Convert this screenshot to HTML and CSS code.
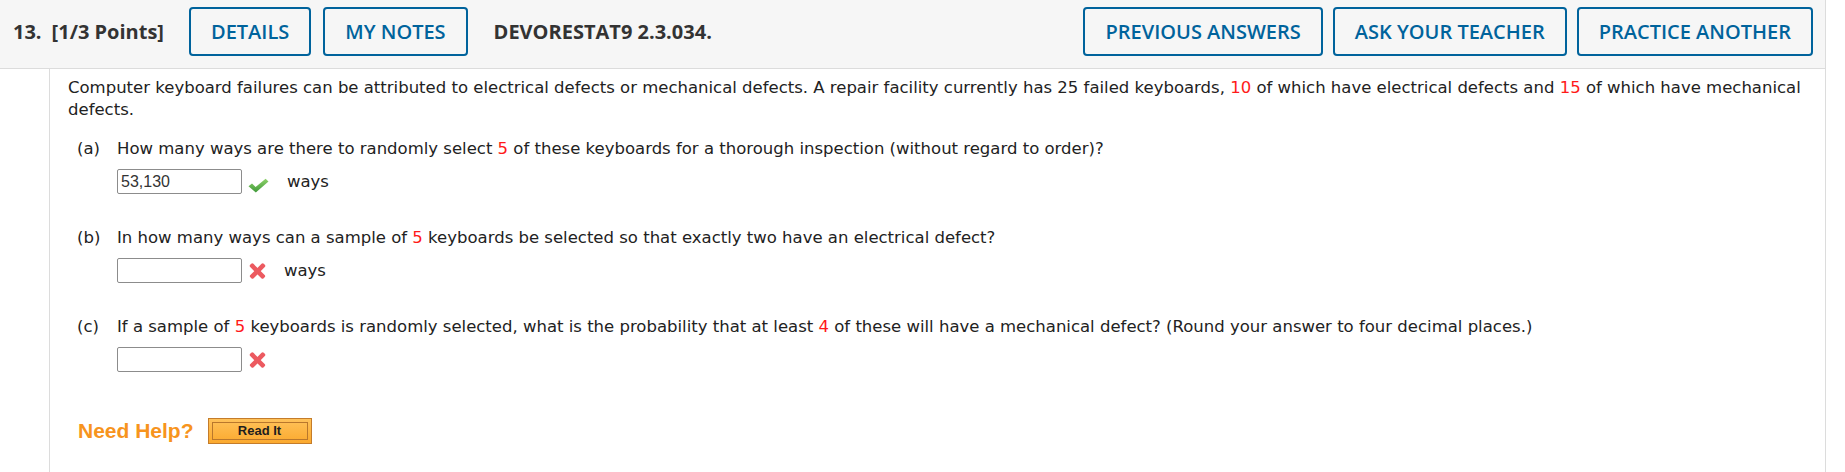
FILE: index.html
```html
<!DOCTYPE html>
<html>
<head>
<meta charset="utf-8">
<link rel="stylesheet" href="styles.css">
</head>
<body>
<div class="page">
  <div class="qhead">
    <span class="qnum">13.</span>
    <span class="qpts">[1/3 Points]</span>
    <button class="hbtn first">DETAILS</button>
    <button class="hbtn">MY NOTES</button>
    <span class="qid">DEVORESTAT9 2.3.034.</span>
    <div class="hright">
      <button class="hbtn">PREVIOUS ANSWERS</button>
      <button class="hbtn">ASK YOUR TEACHER</button>
      <button class="hbtn">PRACTICE ANOTHER</button>
    </div>
  </div>
  <div class="qbody">
    <p class="intro">Computer keyboard failures can be attributed to electrical defects or mechanical defects. A repair facility currently has 25 failed keyboards, <span class="red">10</span> of which have electrical defects and <span class="red">15</span> of which have mechanical defects.</p>

    <div class="part">
      <div class="qline"><span class="plabel">(a)</span><span class="ptext">How many ways are there to randomly select <span class="red">5</span> of these keyboards for a thorough inspection (without regard to order)?</span></div>
      <div class="answer">
        <span class="ansbox">53,130</span>
        <svg class="icon-check" width="21" height="15" viewBox="0 0 21 15">
          <defs>
            <linearGradient id="gc" x1="0" y1="0" x2="0" y2="1">
              <stop offset="0" stop-color="#8fd16a"/>
              <stop offset="1" stop-color="#3f9a3a"/>
            </linearGradient>
          </defs>
          <path d="M0.5 8.2 L4 5.6 L7.6 9 L17.6 0.8 L20.5 3.4 L7.8 14.4 Z" fill="url(#gc)"/>
        </svg>
        <span class="unit">ways</span>
      </div>
    </div>

    <div class="part">
      <div class="qline"><span class="plabel">(b)</span><span class="ptext">In how many ways can a sample of <span class="red">5</span> keyboards be selected so that exactly two have an electrical defect?</span></div>
      <div class="answer">
        <span class="ansbox"></span>
        <svg class="icon-x" width="17" height="16" viewBox="0 0 17 16">
          <g fill="#ec5a60">
            <rect x="-1" y="5.8" width="19" height="4.6" rx="1.6" transform="rotate(45 8.5 8)"/>
            <rect x="-1" y="5.8" width="19" height="4.6" rx="1.6" transform="rotate(-45 8.5 8)"/>
          </g>
        </svg>
        <span class="unit unit-x">ways</span>
      </div>
    </div>

    <div class="part">
      <div class="qline"><span class="plabel">(c)</span><span class="ptext">If a sample of <span class="red">5</span> keyboards is randomly selected, what is the probability that at least <span class="red">4</span> of these will have a mechanical defect? (Round your answer to four decimal places.)</span></div>
      <div class="answer">
        <span class="ansbox"></span>
        <svg class="icon-x" width="17" height="16" viewBox="0 0 17 16">
          <g fill="#ec5a60">
            <rect x="-1" y="5.8" width="19" height="4.6" rx="1.6" transform="rotate(45 8.5 8)"/>
            <rect x="-1" y="5.8" width="19" height="4.6" rx="1.6" transform="rotate(-45 8.5 8)"/>
          </g>
        </svg>
      </div>
    </div>

    <div class="help">
      <span class="needhelp">Need Help?</span>
      <span class="readit"><span class="readit-inner">Read It</span></span>
    </div>
  </div>
</div>
</body>
</html>
```

FILE: styles.css
```css
html, body {
  margin: 0;
  padding: 0;
  background: #ffffff;
}

.page {
  width: 1826px;
  height: 472px;
  box-sizing: border-box;
  border-right: 1px solid #dcdcdc;
  display: flex;
  flex-direction: column;
}

.qhead {
  flex: none;
  border-bottom: 1px solid #dcdcdc;
  background: #f6f6f6;
  display: flex;
  align-items: flex-start;
  padding: 7px 12px 0 13px;
  box-sizing: border-box;
  height: 69px;
  font-family: "Open Sans", "Liberation Sans", sans-serif;
  color: #333333;
}

.qnum, .qpts, .qid {
  font-weight: 700;
  font-size: 20px;
  line-height: 49px;
  height: 49px;
}

.qpts {
  margin-left: 10px;
}

.qid {
  margin-left: 26px;
}

.hbtn {
  font-family: "Open Sans", "Liberation Sans", sans-serif;
  font-weight: 600;
  font-size: 20px;
  color: #00639c;
  background: #f6f6f6;
  border: 2px solid #00639c;
  border-radius: 4px;
  height: 49px;
  padding: 0 20px;
  margin: 0;
  line-height: 45px;
  cursor: pointer;
}

.hbtn.first {
  margin-left: 25px;
}

.hbtn + .hbtn {
  margin-left: 12px;
}

.hright {
  margin-left: auto;
  display: flex;
  gap: 10px;
}

.hright .hbtn + .hbtn {
  margin-left: 0;
}

.qbody {
  flex: 1;
  margin-left: 49px;
  border-left: 1px solid #dcdcdc;
  padding: 8px 0 0 18px;
  font-family: "DejaVu Sans", Verdana, sans-serif;
  font-size: 16.5px;
  line-height: 22px;
  color: #222222;
}

.intro {
  margin: 0;
}

.red {
  color: #ff1a1a;
}

.part {
  margin-top: 17px;
  padding-left: 9px;
}

.part + .part {
  margin-top: 33px;
}

.qline {
  display: flex;
}

.plabel {
  width: 40px;
  flex: none;
}

.answer {
  display: flex;
  align-items: center;
  margin-top: 9px;
  margin-left: 40px;
  height: 25px;
}

.ansbox {
  width: 125px;
  height: 25px;
  box-sizing: border-box;
  border: 1px solid #8c8c8c;
  border-radius: 2px;
  font-family: "Liberation Sans", Arial, sans-serif;
  font-size: 16px;
  line-height: 23px;
  padding-left: 3px;
  color: #333333;
  background: #ffffff;
}

.icon-check {
  margin-left: 6px;
  margin-top: 7px;
}

.icon-x {
  margin-left: 7px;
  margin-top: 1px;
}

.unit {
  margin-left: 18px;
}

.unit-x {
  margin-left: 18px;
}

.help {
  display: flex;
  align-items: center;
  margin-top: 46px;
  padding-left: 10px;
}

.needhelp {
  font-family: "Liberation Sans", Arial, sans-serif;
  font-weight: 700;
  font-size: 21px;
  color: #f7941d;
}

.readit {
  margin-left: 14px;
  width: 104px;
  height: 26px;
  box-sizing: border-box;
  border: 1px solid #c47c2a;
  background: linear-gradient(#ffc25a, #fba92e);
  padding: 3px 3px;
  display: flex;
}

.readit-inner {
  flex: 1;
  border: 1px solid #b9772c;
  font-family: "Liberation Sans", Arial, sans-serif;
  font-weight: 700;
  font-size: 13px;
  line-height: 16px;
  text-align: center;
  color: #1e1e1e;
}
```
